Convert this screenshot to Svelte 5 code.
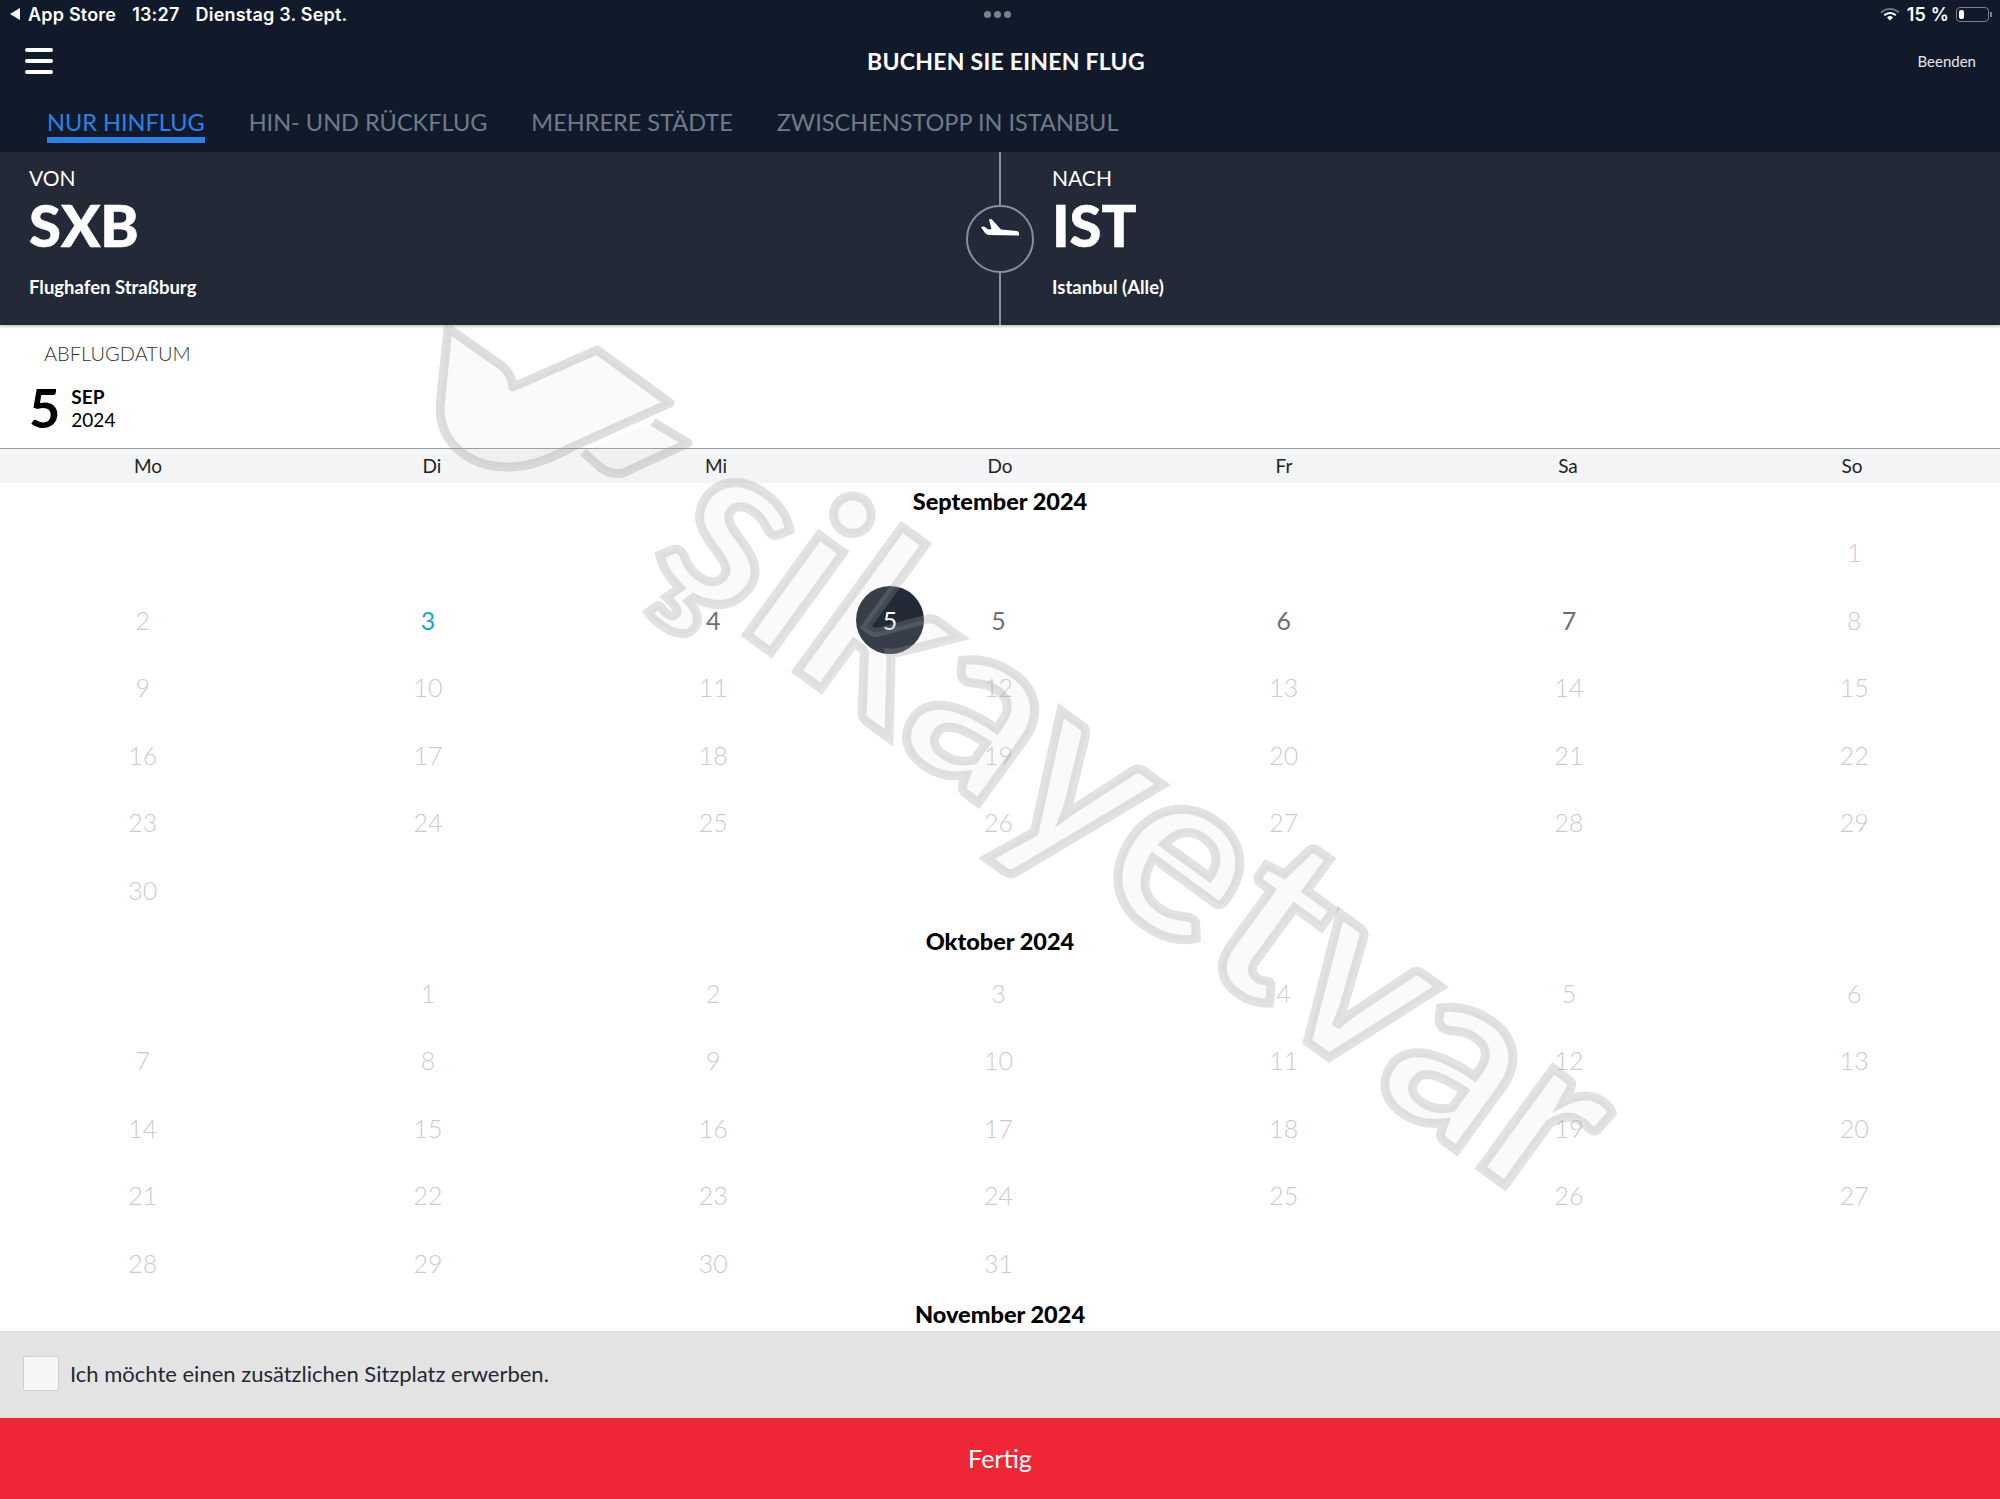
<script>
  const tabs = ['NUR HINFLUG', 'HIN- UND RÜCKFLUG', 'MEHRERE STÄDTE', 'ZWISCHENSTOPP IN ISTANBUL'];
  const weekdays = ['Mo', 'Di', 'Mi', 'Do', 'Fr', 'Sa', 'So'];

  // offset = empty cells before the 1st of the month
  const months = [
    { title: 'September 2024', offset: 6, days: 30, active: [4, 5, 6, 7], today: 3 },
    { title: 'Oktober 2024', offset: 1, days: 31, active: [], today: 0 },
    { title: 'November 2024', offset: 4, days: 0, active: [], today: 0 }
  ];

  const range = (n) => Array.from({ length: n }, (_, i) => i + 1);
</script>

<div class="app">
  <header class="top">
    <div class="status">
      <div class="status-left">
        <span class="back"></span>
        <span>App Store</span>
        <span class="time">13:27</span>
        <span class="date-label">Dienstag 3. Sept.</span>
      </div>
      <div class="dots"><i></i><i></i><i></i></div>
      <div class="status-right">
        <svg class="wifi" width="20" height="14" viewBox="0 0 20 14">
          <path d="M1 5.5a13 13 0 0 1 18 0" fill="none" stroke="#6b7280" stroke-width="2" />
          <path d="M4.2 8.3a8.5 8.5 0 0 1 11.6 0" fill="none" stroke="#fff" stroke-width="2" />
          <path d="M10 13.5l-3-3a4.300 4.300 0 0 1 6 0z" fill="#fff" />
        </svg>
        <span>15 %</span>
        <span class="battery"><b></b></span>
      </div>
    </div>

    <div class="nav">
      <div class="burger"><i></i><i></i><i></i></div>
      <div class="nav-title">BUCHEN SIE EINEN FLUG</div>
      <div class="quit">Beenden</div>
    </div>

    <nav class="tabs">
      {#each tabs as tab, i}
        <span class="tab" class:active={i === 0}>{tab}</span>
      {/each}
    </nav>
  </header>

  <section class="route">
    <div class="place">
      <div class="label">VON</div>
      <div class="code">SXB</div>
      <div class="name">Flughafen Straßburg</div>
    </div>
    <div class="divider">
      <span class="plane">
        <svg width="40" height="18" viewBox="0 0 40 18">
          <path d="M1 8l3-.5 4.500 3 3-.5L9 .5 11.500 0l9.500 10.500 16 1.500q2 .5 2 2v2.500L9 16q-2 0-4-2z" fill="#fff" />
        </svg>
      </span>
    </div>
    <div class="place">
      <div class="label">NACH</div>
      <div class="code">IST</div>
      <div class="name">Istanbul (Alle)</div>
    </div>
  </section>

  <section class="date">
    <div class="date-title">ABFLUGDATUM</div>
    <div class="date-value">
      <span class="day">5</span>
      <span class="month-year"><b>SEP</b><span>2024</span></span>
    </div>
  </section>

  <div class="weekdays">
    {#each weekdays as d}
      <span>{d}</span>
    {/each}
  </div>

  <main class="calendar">
    {#each months as m}
      <h2>{m.title}</h2>
      {#if m.days}
        <div class="grid">
          {#each range(m.offset) as _}
            <span></span>
          {/each}
          {#each range(m.days) as d}
            <span class="cell" class:on={m.active.includes(d)} class:today={m.today === d}>{d}</span>
          {/each}
        </div>
      {/if}
    {/each}
    <span class="selected">5</span>
  </main>

  <div class="extra">
    <span class="check"></span>
    <span>Ich möchte einen zusätzlichen Sitzplatz erwerben.</span>
  </div>
  <div class="done">Fertig</div>

  <!-- watermark lies over the calendar -->
  <div class="watermark">
    <svg class="mark" width="270" height="160" viewBox="0 0 270 160">
      <path d="M12 3L66 41q10 9 11 21L161 25l73 53-100 45q-34 19-62 19C35 142 4 120 4 82z" />
      <path d="M217 97l35 21-65 30q-12 2-22-5l-18-16" />
    </svg>
    <span class="wm-text">şikayetvar</span>
  </div>
</div>

<style>
  :global(body) {
    margin: 0;
    background: #fff;
  }

  .app {
    position: relative;
    width: 2000px;
    height: 1499px;
    display: flex;
    flex-direction: column;
    overflow: hidden;
    font-family: Lato, "Open Sans", sans-serif;
    color: #000;
  }

  .top {
    height: 152px;
    flex: none;
    background: #111a2b;
    color: #fff;
    display: flex;
    flex-direction: column;
  }

  .status {
    height: 30px;
    box-sizing: border-box;
    padding: 0 11px 2px 10px;
    display: flex;
    align-items: center;
    justify-content: space-between;
    font-family: Inter, sans-serif;
    font-size: 18px;
    font-weight: 600;
    letter-spacing: 0.2px;
    position: relative;
  }

  .status-left {
    display: flex;
    align-items: center;
    gap: 6px;
  }

  .back {
    width: 0;
    height: 0;
    border-top: 6px solid transparent;
    border-bottom: 6px solid transparent;
    border-right: 10px solid #fff;
    margin-right: 2px;
  }

  .time {
    margin-left: 10px;
  }

  .date-label {
    margin-left: 10px;
  }

  .dots {
    position: absolute;
    left: 984px;
    top: 11px;
    display: flex;
    gap: 3px;
  }

  .dots i {
    width: 7px;
    height: 7px;
    border-radius: 50%;
    background: #7b818c;
  }

  .status-right {
    display: flex;
    align-items: center;
    gap: 7px;
  }

  .battery {
    width: 33px;
    height: 15px;
    border: 1px solid #7b818c;
    border-radius: 4px;
    padding: 2px;
    box-sizing: border-box;
    display: flex;
    position: relative;
  }

  .battery::after {
    content: '';
    position: absolute;
    right: -4px;
    top: 4px;
    width: 2px;
    height: 5px;
    background: #7b818c;
  }

  .battery b {
    width: 5px;
    background: #fff;
    border-radius: 2px;
  }

  .nav {
    height: 62px;
    display: flex;
    align-items: center;
    justify-content: space-between;
    padding: 0 24px 0 25px;
    position: relative;
  }

  .burger {
    width: 28px;
    display: flex;
    flex-direction: column;
    gap: 7px;
  }

  .burger i {
    height: 4px;
    border-radius: 2px;
    background: #fff;
  }

  .nav-title {
    position: absolute;
    left: 12px;
    right: 0;
    text-align: center;
    font-size: 23px;
    font-weight: 700;
    letter-spacing: 0.25px;
  }

  .quit {
    font-size: 15px;
    color: #e4e6ea;
  }

  .tabs {
    display: flex;
    gap: 44px;
    padding-left: 47px;
  }

  .tab {
    height: 51px;
    box-sizing: border-box;
    padding-top: 15px;
    font-size: 23.500px;
    line-height: 30px;
    color: #6f7a8a;
    white-space: nowrap;
  }

  .tab.active {
    color: #2f80e4;
    border-bottom: 6px solid #2f80e4;
  }

  .route {
    height: 173px;
    flex: none;
    background: #232936;
    color: #fff;
    display: grid;
    grid-template-columns: 1000px 1000px;
    position: relative;
    box-shadow: 0 2px 2px rgba(0, 0, 0, 0.2);
  }

  .place {
    padding: 13px 0 0 29px;
  }

  .place + .divider + .place {
    padding-left: 52px;
  }

  .label {
    font-size: 21px;
    line-height: 26px;
    font-weight: 400;
  }

  .code {
    font-size: 58px;
    line-height: 62px;
    font-weight: 900;
    margin-top: 3px;
    -webkit-text-stroke: 0.6px #fff;
  }

  .name {
    font-size: 18.500px;
    line-height: 24px;
    font-weight: 700;
    margin-top: 19px;
  }

  .divider {
    position: absolute;
    left: 999px;
    top: 0;
    bottom: 0;
    width: 2px;
    background: #8b8f98;
    display: flex;
    align-items: center;
    justify-content: center;
  }

  .plane {
    flex: none;
    width: 68px;
    height: 68px;
    border: 2px solid #8b8f98;
    border-radius: 50%;
    background: #232936;
    display: flex;
    align-items: center;
    justify-content: center;
    padding-bottom: 22px;
    box-sizing: border-box;
  }

  .date {
    height: 124px;
    flex: none;
    box-sizing: border-box;
    padding-top: 15px;
    border-bottom: 1px solid #9a9a9a;
  }

  .date-title {
    padding-left: 44px;
    font-size: 20px;
    line-height: 26px;
    font-weight: 300;
    color: #333;
  }

  .date-value {
    display: flex;
    align-items: center;
    gap: 11px;
    padding-left: 29px;
    margin-top: 14px;
  }

  .day {
    font-size: 54px;
    line-height: 56px;
    font-weight: 700;
  }

  .month-year {
    display: flex;
    flex-direction: column;
    font-size: 19px;
    line-height: 23px;
  }

  .month-year b {
    font-weight: 700;
  }

  .weekdays {
    height: 34px;
    flex: none;
    box-sizing: border-box;
    background: #f3f4f6;
    display: grid;
    grid-template-columns: repeat(7, 284px);
    padding: 0 0 2px 6px;
    align-items: center;
    text-align: center;
    font-size: 19px;
    color: #222;
  }

  .calendar {
    flex: 1;
    min-height: 0;
    overflow: hidden;
    position: relative;
  }

  h2 {
    margin: 0;
    height: 35.400px;
    font-size: 23.500px;
    line-height: 36px;
    font-weight: 900;
    text-align: center;
  }

  .grid {
    display: grid;
    grid-template-columns: repeat(7, 1fr);
    grid-auto-rows: 67.5px;
    padding-right: 3px;
  }

  .cell {
    display: flex;
    align-items: center;
    justify-content: center;
    font-size: 25px;
    font-weight: 300;
    color: #cbcbcb;
  }

  .cell.on {
    color: #6f6f6f;
    font-weight: 400;
  }

  .cell.today {
    color: #1aa7c9;
    font-weight: 400;
  }

  /* the picked date sits off the grid, next to its column */
  .selected {
    position: absolute;
    left: 856px;
    top: 103px;
    width: 68px;
    height: 68px;
    border-radius: 50%;
    background: #232936;
    color: #fff;
    font-size: 25px;
    display: flex;
    align-items: center;
    justify-content: center;
  }

  .extra {
    height: 87px;
    flex: none;
    box-sizing: border-box;
    background: #e3e3e3;
    border-top: 1px solid #dcdcdc;
    display: flex;
    align-items: center;
    gap: 11px;
    padding: 0 0 4px 23px;
    font-size: 22px;
    color: #232936;
  }

  .check {
    width: 36px;
    height: 35px;
    box-sizing: border-box;
    background: #f5f6f7;
    border: 1px solid #cfcfcf;
    border-radius: 2px;
  }

  .done {
    height: 81px;
    flex: none;
    background: #ef2636;
    color: #fff;
    font-size: 25px;
    padding-bottom: 2px;
    box-sizing: border-box;
    display: flex;
    align-items: center;
    justify-content: center;
  }

  .watermark {
    position: absolute;
    left: 0;
    right: 0;
    top: 325px;
    height: 1006px;
    overflow: hidden;
    pointer-events: none;
  }

  .mark {
    position: absolute;
    left: 436px;
    top: 0;
  }

  .mark path {
    fill: rgba(210, 210, 210, 0.1);
    stroke: rgba(150, 150, 150, 0.3);
    stroke-width: 9;
    stroke-linejoin: round;
  }

  .wm-text {
    position: absolute;
    left: 702px;
    top: 22px;
    font-family: Lato, sans-serif;
    font-size: 240px;
    line-height: 280px;
    font-weight: 700;
    letter-spacing: 2px;
    white-space: nowrap;
    color: rgba(210, 210, 210, 0.12);
    -webkit-text-stroke: 9px rgba(150, 150, 150, 0.28);
    transform: rotate(36deg);
    transform-origin: 0 50%;
  }
</style>
